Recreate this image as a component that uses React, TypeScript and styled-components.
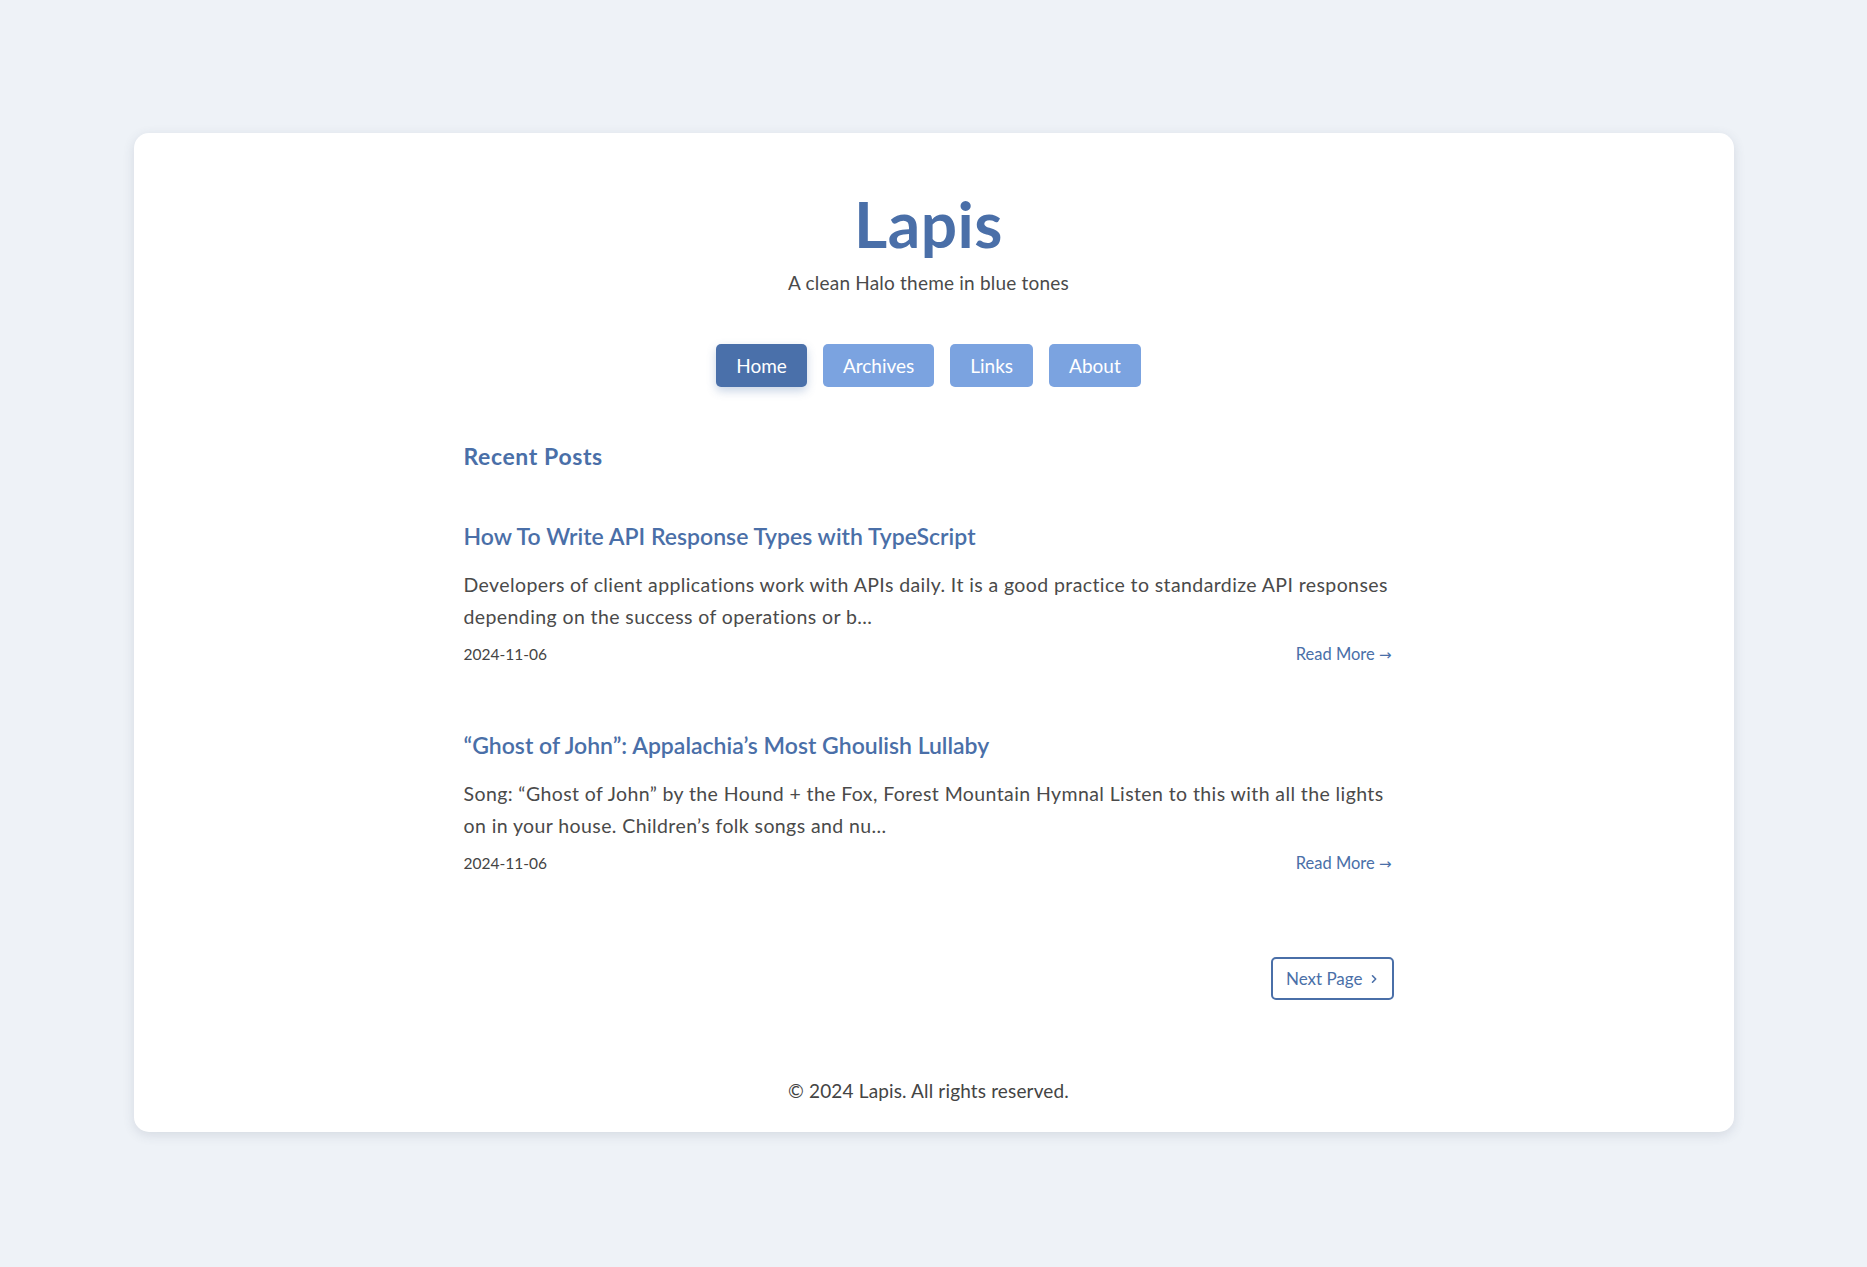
import React from 'react';
import styled, { createGlobalStyle } from 'styled-components';

type Post = {
  title: string;
  excerpt: string;
  date: string;
};

const posts: Post[] = [
  {
    title: 'How To Write API Response Types with TypeScript',
    excerpt:
      'Developers of client applications work with APIs daily. It is a good practice to standardize API responses depending on the success of operations or b...',
    date: '2024-11-06',
  },
  {
    title: '\u201cGhost of John\u201d: Appalachia\u2019s Most Ghoulish Lullaby',
    excerpt:
      'Song: \u201cGhost of John\u201d by the Hound + the Fox, Forest Mountain Hymnal Listen to this with all the lights on in your house. Children\u2019s folk songs and nu...',
    date: '2024-11-06',
  },
];

const navItems = ['Home', 'Archives', 'Links', 'About'];

const App: React.FC = () => {
  return (
    <>
      <GlobalStyle />
      <StyledPage>
        <StyledCard>
          <StyledHeader>
            <StyledSiteTitle>Lapis</StyledSiteTitle>
            <StyledTagline>A clean Halo theme in blue tones</StyledTagline>
            <StyledNav>
              {navItems.map((item, i) => (
                <NavButton key={item} active={i === 0}>
                  {item}
                </NavButton>
              ))}
            </StyledNav>
          </StyledHeader>

          <StyledMain>
            <StyledSectionTitle>Recent Posts</StyledSectionTitle>
            <StyledPostList>
              {posts.map((post) => (
                <StyledPost key={post.title}>
                  <StyledPostTitle href="#">{post.title}</StyledPostTitle>
                  <StyledExcerpt>{post.excerpt}</StyledExcerpt>
                  <StyledPostMeta>
                    <span className="date">{post.date}</span>
                    <a className="more" href="#">
                      Read More <span className="arrow">&rarr;</span>
                    </a>
                  </StyledPostMeta>
                </StyledPost>
              ))}
            </StyledPostList>
            <StyledPagination>
              <PageButton>
                Next Page
                <svg width="10" height="10" viewBox="0 0 10 10" aria-hidden="true">
                  <path d="M3.5 1.8 L6.7 5 L3.5 8.2" fill="none" stroke="currentColor" strokeWidth="1.6" strokeLinecap="round" strokeLinejoin="round" />
                </svg>
              </PageButton>
            </StyledPagination>
          </StyledMain>

          <StyledFooter>&copy; 2024 Lapis. All rights reserved.</StyledFooter>
        </StyledCard>
      </StyledPage>
    </>
  );
};

const GlobalStyle = createGlobalStyle`
  html, body {
    margin: 0;
    padding: 0;
    background: #eef2f7;
  }
  body {
    font-family: Lato, "Noto Sans", "Liberation Sans", sans-serif;
    color: #444;
    -webkit-font-smoothing: antialiased;
  }
  * {
    box-sizing: border-box;
  }
`;

const StyledPage = styled.div`
  min-height: 1267px;
  padding: 133px 0 100px;
`;

const StyledCard = styled.div`
  width: 1600px;
  margin: 0 auto;
  padding: 52px 10px 28px 0;
  background: #ffffff;
  border-radius: 15px;
  box-shadow: 0 3px 12px rgba(60, 72, 100, 0.14);
`;

const StyledHeader = styled.header`
  display: flex;
  flex-direction: column;
  align-items: center;
`;

const StyledSiteTitle = styled.h1`
  margin: 0;
  font-size: 64px;
  font-weight: 700;
  line-height: 77px;
  color: #4a6fa8;
  letter-spacing: 0.5px;
`;

const StyledTagline = styled.p`
  margin: 7px 0 0;
  font-size: 19px;
  line-height: 27px;
  letter-spacing: 0.2px;
  color: #4a4a4a;
`;

const StyledNav = styled.nav`
  display: flex;
  gap: 16px;
  margin-top: 48px;
`;

const NavButton = styled.a<{ active?: boolean }>`
  display: flex;
  align-items: center;
  justify-content: center;
  height: 43px;
  padding: 0 20px;
  border-radius: 5px;
  font-size: 19px;
  line-height: 1;
  color: #ffffff;
  cursor: pointer;
  background: ${({ active }) => (active ? '#4a70aa' : '#7ba3e0')};
  box-shadow: ${({ active }) => (active ? '0 4px 10px rgba(74, 112, 170, 0.3)' : 'none')};
`;

const StyledMain = styled.main`
  width: 930px;
  margin: 55px auto 0;
`;

const StyledSectionTitle = styled.h2`
  margin: 0;
  font-size: 23px;
  line-height: 29px;
  font-weight: 700;
  letter-spacing: 0.6px;
  color: #4a6fa8;
`;

const StyledPostList = styled.div`
  display: flex;
  flex-direction: column;
  gap: 66px;
  margin-top: 51px;
`;

const StyledPost = styled.article`
  display: flex;
  flex-direction: column;
`;

const StyledPostTitle = styled.a`
  font-size: 23px;
  line-height: 29px;
  font-weight: 600;
  color: #4a6fa8;
  text-decoration: none;
`;

const StyledExcerpt = styled.p`
  margin: 18px 0 0;
  font-size: 19.5px;
  line-height: 32px;
  letter-spacing: 0.4px;
  color: #4a4a4a;
`;

const StyledPostMeta = styled.div`
  display: flex;
  justify-content: space-between;
  align-items: center;
  margin-top: 10px;
  height: 22px;
  font-size: 15.5px;
  .date {
    color: #444;
  }
  .more {
    margin-right: 2px;
    font-size: 16.5px;
    color: #4a6fa8;
    text-decoration: none;
  }
  .arrow {
    font-family: "DejaVu Sans", sans-serif;
    font-size: 15px;
  }
`;

const StyledPagination = styled.div`
  display: flex;
  justify-content: flex-end;
  margin-top: 83px;
`;

const PageButton = styled.button`
  display: flex;
  align-items: center;
  gap: 6px;
  height: 43px;
  padding: 0 13px 0 13px;
  border: 2px solid #4a6fa8;
  border-radius: 5px;
  background: #ffffff;
  color: #4a6fa8;
  font-family: Lato, "Noto Sans", sans-serif;
  font-size: 17px;
  cursor: pointer;
`;

const StyledFooter = styled.footer`
  margin-top: 77px;
  text-align: center;
  font-size: 19px;
  line-height: 27px;
  letter-spacing: 0.15px;
  color: #444;
`;

export default App;
